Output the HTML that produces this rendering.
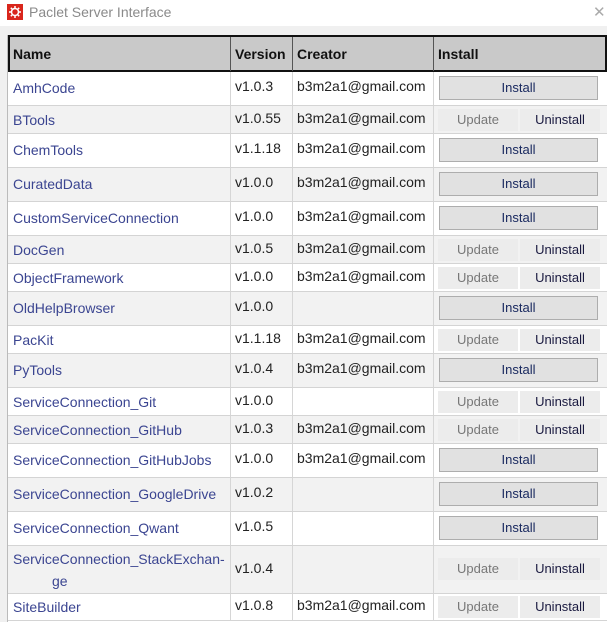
<!DOCTYPE html>
<html><head><meta charset="utf-8">
<style>
*{margin:0;padding:0;box-sizing:border-box}
body{width:607px;height:622px;overflow:hidden;background:#f0f0f0;font-family:"Liberation Sans",sans-serif;font-size:14px;color:#222;position:relative}
.title{position:absolute;left:0;top:0;width:607px;height:26px;background:#fff}
.icon{position:absolute;left:7px;top:4px;width:16px;height:16px;background:#d9261c}
.ttl{position:absolute;left:29px;top:4px;color:#8a8a8a;font-size:14px}
.x{position:absolute;left:593px;top:3px;color:#aaa;font-size:15px;font-family:"DejaVu Sans",sans-serif;font-weight:200}
.tbl{position:absolute;left:7px;top:35px;width:600px;height:587px;background:#fff;border-left:1px solid #bbb}
.hd{position:absolute;left:8px;top:35px;width:599px;height:37px;background:#c9c9c9;border:2px solid #111}
.hd span{position:absolute;top:9px;font-weight:bold;color:#111}
.vl{position:absolute;width:1px;background:#555;top:37px;height:34px}
.row{position:absolute;left:8px;width:599px;border-bottom:1px solid #d4d4d4}
.row.g{background:#f2f2f2}
.c{position:absolute;top:0;bottom:0;width:1px;background:#d6d6d6}
.n{position:absolute;left:5px;color:#3b4591}
.v{position:absolute;left:227px}
.e{position:absolute;left:289px}
.ib{position:absolute;left:431px;width:159px;height:24px;background:#e1e1e1;border:1px solid #adadad;text-align:center;line-height:22px;font-size:13px;color:#1a2a60}
.u1,.u2{position:absolute;height:22px;background:#ececec;text-align:center;line-height:22px;font-size:13px}
.u1{left:430px;width:80px;color:#777}
.u2{left:512px;width:80px;color:#1a1a40}
</style></head><body>
<div class="title"><div class="icon"><svg width="16" height="16" viewBox="0 0 16 16"><g fill="none" stroke="#fff" stroke-width="1.5"><circle cx="8" cy="8" r="3.5"/><path d="M8 2v2M8 12v2M2 8h2M12 8h2M3.8 3.8l1.4 1.4M10.8 10.8l1.4 1.4M3.8 12.2l1.4-1.4M10.8 5.2l1.4-1.4"/></g></svg></div><div class="ttl">Paclet Server Interface</div><div class="x">✕</div></div>
<div class="tbl"></div>
<div class="hd"><span style="left:3px">Name</span><span style="left:225px">Version</span><span style="left:287px">Creator</span><span style="left:428px">Install</span></div>
<div class="vl" style="left:230px"></div><div class="vl" style="left:292px"></div><div class="vl" style="left:433px"></div>

<div class="row" style="top:72px;height:34px"><div class="c" style="left:222px"></div><div class="c" style="left:284px"></div><div class="c" style="left:425px"></div><div class="n" style="top:8px">AmhCode</div><div class="v" style="top:6px">v1.0.3</div><div class="e" style="top:6px">b3m2a1@gmail.com</div><div class="ib" style="top:4px">Install</div></div>
<div class="row g" style="top:106px;height:28px"><div class="c" style="left:222px"></div><div class="c" style="left:284px"></div><div class="c" style="left:425px"></div><div class="n" style="top:6px">BTools</div><div class="v" style="top:4px">v1.0.55</div><div class="e" style="top:4px">b3m2a1@gmail.com</div><div class="u1" style="top:3px">Update</div><div class="u2" style="top:3px">Uninstall</div></div>
<div class="row" style="top:134px;height:34px"><div class="c" style="left:222px"></div><div class="c" style="left:284px"></div><div class="c" style="left:425px"></div><div class="n" style="top:8px">ChemTools</div><div class="v" style="top:6px">v1.1.18</div><div class="e" style="top:6px">b3m2a1@gmail.com</div><div class="ib" style="top:4px">Install</div></div>
<div class="row g" style="top:168px;height:34px"><div class="c" style="left:222px"></div><div class="c" style="left:284px"></div><div class="c" style="left:425px"></div><div class="n" style="top:8px">CuratedData</div><div class="v" style="top:6px">v1.0.0</div><div class="e" style="top:6px">b3m2a1@gmail.com</div><div class="ib" style="top:4px">Install</div></div>
<div class="row" style="top:202px;height:34px"><div class="c" style="left:222px"></div><div class="c" style="left:284px"></div><div class="c" style="left:425px"></div><div class="n" style="top:8px">CustomServiceConnection</div><div class="v" style="top:6px">v1.0.0</div><div class="e" style="top:6px">b3m2a1@gmail.com</div><div class="ib" style="top:4px">Install</div></div>
<div class="row g" style="top:236px;height:28px"><div class="c" style="left:222px"></div><div class="c" style="left:284px"></div><div class="c" style="left:425px"></div><div class="n" style="top:6px">DocGen</div><div class="v" style="top:4px">v1.0.5</div><div class="e" style="top:4px">b3m2a1@gmail.com</div><div class="u1" style="top:3px">Update</div><div class="u2" style="top:3px">Uninstall</div></div>
<div class="row" style="top:264px;height:28px"><div class="c" style="left:222px"></div><div class="c" style="left:284px"></div><div class="c" style="left:425px"></div><div class="n" style="top:6px">ObjectFramework</div><div class="v" style="top:4px">v1.0.0</div><div class="e" style="top:4px">b3m2a1@gmail.com</div><div class="u1" style="top:3px">Update</div><div class="u2" style="top:3px">Uninstall</div></div>
<div class="row g" style="top:292px;height:34px"><div class="c" style="left:222px"></div><div class="c" style="left:284px"></div><div class="c" style="left:425px"></div><div class="n" style="top:8px">OldHelpBrowser</div><div class="v" style="top:6px">v1.0.0</div><div class="ib" style="top:4px">Install</div></div>
<div class="row" style="top:326px;height:28px"><div class="c" style="left:222px"></div><div class="c" style="left:284px"></div><div class="c" style="left:425px"></div><div class="n" style="top:6px">PacKit</div><div class="v" style="top:4px">v1.1.18</div><div class="e" style="top:4px">b3m2a1@gmail.com</div><div class="u1" style="top:3px">Update</div><div class="u2" style="top:3px">Uninstall</div></div>
<div class="row g" style="top:354px;height:34px"><div class="c" style="left:222px"></div><div class="c" style="left:284px"></div><div class="c" style="left:425px"></div><div class="n" style="top:8px">PyTools</div><div class="v" style="top:6px">v1.0.4</div><div class="e" style="top:6px">b3m2a1@gmail.com</div><div class="ib" style="top:4px">Install</div></div>
<div class="row" style="top:388px;height:28px"><div class="c" style="left:222px"></div><div class="c" style="left:284px"></div><div class="c" style="left:425px"></div><div class="n" style="top:6px">ServiceConnection_Git</div><div class="v" style="top:4px">v1.0.0</div><div class="u1" style="top:3px">Update</div><div class="u2" style="top:3px">Uninstall</div></div>
<div class="row g" style="top:416px;height:28px"><div class="c" style="left:222px"></div><div class="c" style="left:284px"></div><div class="c" style="left:425px"></div><div class="n" style="top:6px">ServiceConnection_GitHub</div><div class="v" style="top:4px">v1.0.3</div><div class="e" style="top:4px">b3m2a1@gmail.com</div><div class="u1" style="top:3px">Update</div><div class="u2" style="top:3px">Uninstall</div></div>
<div class="row" style="top:444px;height:34px"><div class="c" style="left:222px"></div><div class="c" style="left:284px"></div><div class="c" style="left:425px"></div><div class="n" style="top:8px">ServiceConnection_GitHubJobs</div><div class="v" style="top:6px">v1.0.0</div><div class="e" style="top:6px">b3m2a1@gmail.com</div><div class="ib" style="top:4px">Install</div></div>
<div class="row g" style="top:478px;height:34px"><div class="c" style="left:222px"></div><div class="c" style="left:284px"></div><div class="c" style="left:425px"></div><div class="n" style="top:8px">ServiceConnection_GoogleDrive</div><div class="v" style="top:6px">v1.0.2</div><div class="ib" style="top:4px">Install</div></div>
<div class="row" style="top:512px;height:34px"><div class="c" style="left:222px"></div><div class="c" style="left:284px"></div><div class="c" style="left:425px"></div><div class="n" style="top:8px">ServiceConnection_Qwant</div><div class="v" style="top:6px">v1.0.5</div><div class="ib" style="top:4px">Install</div></div>
<div class="row g" style="top:546px;height:48px"><div class="c" style="left:222px"></div><div class="c" style="left:284px"></div><div class="c" style="left:425px"></div><div class="n" style="top:5px">ServiceConnection_StackExchan-</div><div class="n" style="top:27px;left:44px">ge</div><div class="v" style="top:14px">v1.0.4</div><div class="u1" style="top:12px">Update</div><div class="u2" style="top:12px">Uninstall</div></div>
<div class="row" style="top:594px;height:27px"><div class="c" style="left:222px"></div><div class="c" style="left:284px"></div><div class="c" style="left:425px"></div><div class="n" style="top:5px">SiteBuilder</div><div class="v" style="top:3px">v1.0.8</div><div class="e" style="top:3px">b3m2a1@gmail.com</div><div class="u1" style="top:2px">Update</div><div class="u2" style="top:2px">Uninstall</div></div>
</body></html>
